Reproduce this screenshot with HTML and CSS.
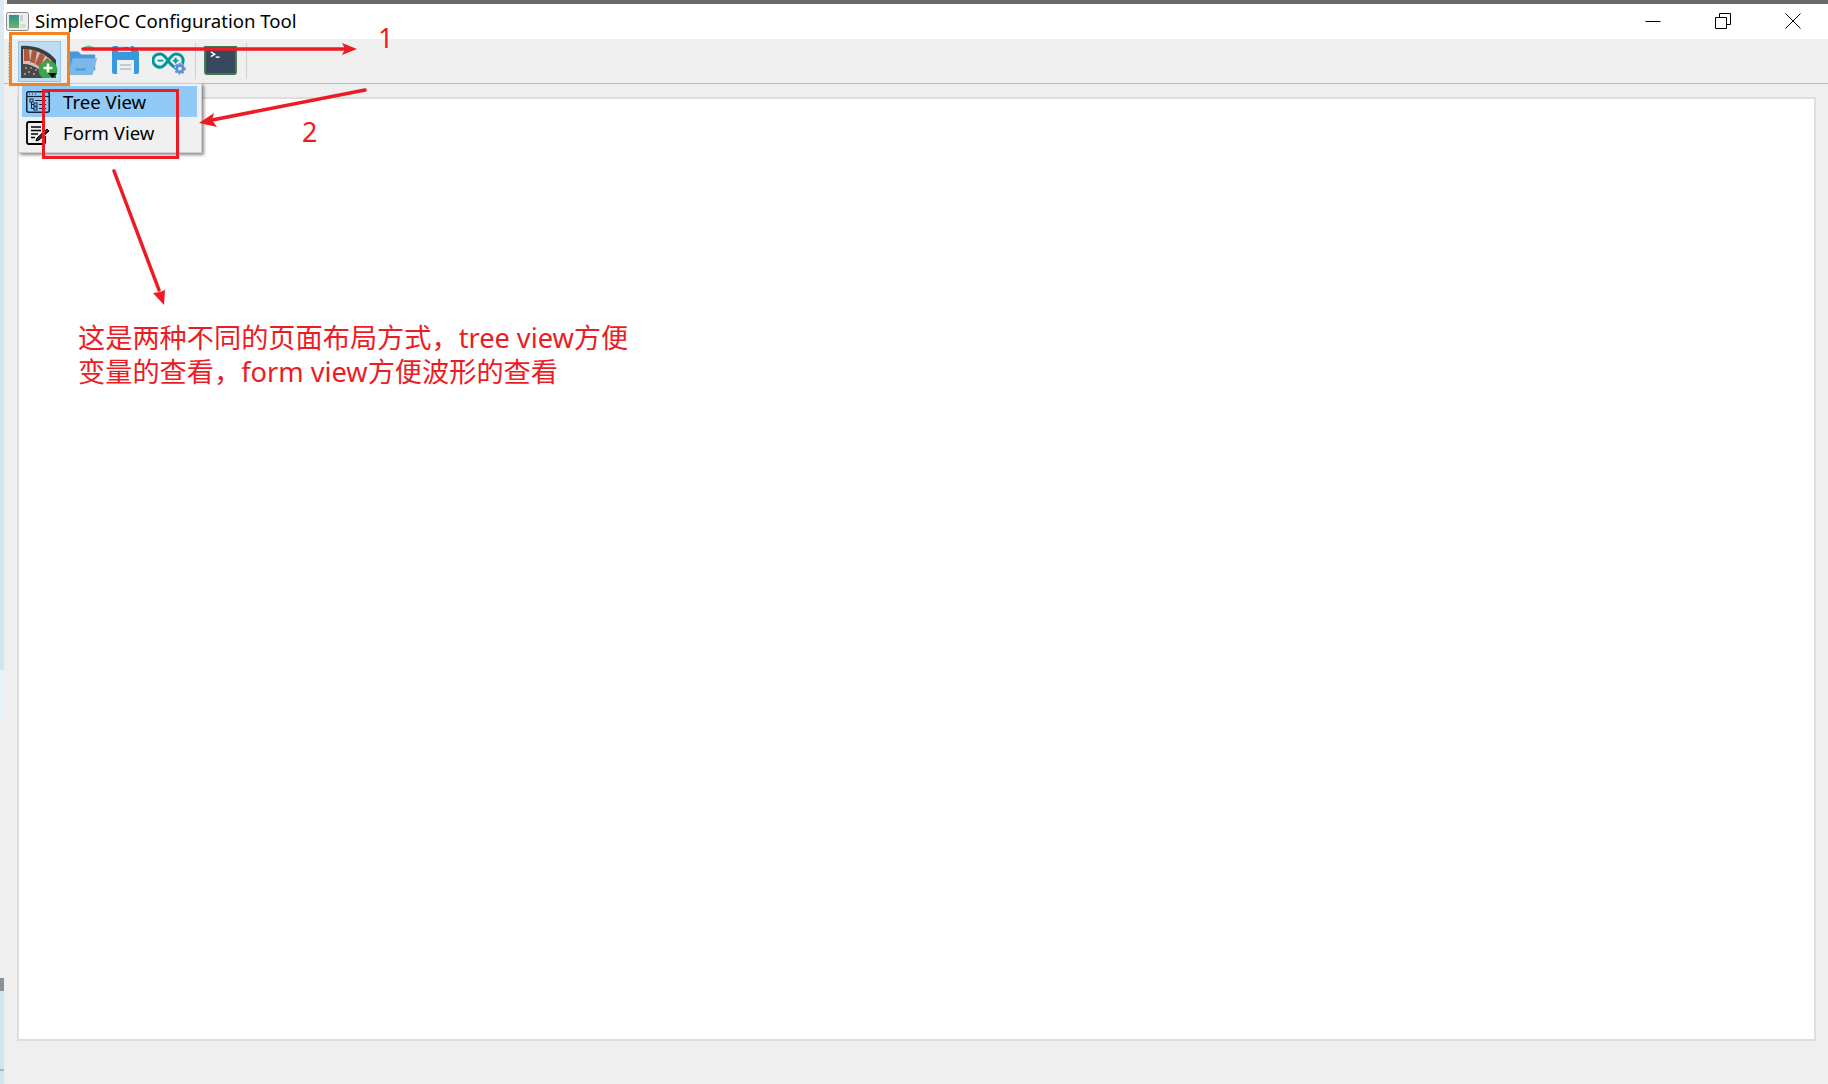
FILE: index.html
```html
<!DOCTYPE html>
<html lang="zh">
<head>
<meta charset="utf-8">
<title>SimpleFOC Configuration Tool</title>
<link rel="stylesheet" href="styles.css">
</head>
<body>
<div class="page">
  <div class="strip">
    <div class="strip-top"></div>
    <div class="strip-light"></div>
    <div class="strip-mid"></div>
    <div class="strip-mark"></div>
    <div class="strip-low"></div>
    <div class="strip-bar"></div>
    <div class="strip-end"></div>
  </div>
  <div class="window">
    <div class="topline"></div>
    <header class="titlebar">
      <svg class="app-icon" width="24" height="20" viewBox="0 0 24 20">
        <rect x="0.5" y="0.5" width="22" height="18" rx="2" fill="#eee" stroke="#8a8a8a"/>
        <defs><linearGradient id="ag" x1="0" y1="0" x2="0" y2="1"><stop offset="0" stop-color="#2f8f8a"/><stop offset="1" stop-color="#6fb56a"/></linearGradient></defs>
        <rect x="3" y="3" width="10" height="13" fill="url(#ag)"/>
        <rect x="14" y="3" width="3" height="6" fill="#c8d0d0"/>
        <rect x="14" y="12" width="6" height="4" fill="#d8dcdc"/>
      </svg>
      <span class="title">SimpleFOC Configuration Tool</span>
      <div class="controls">
        <button class="ctrl ctrl-min"><svg width="16" height="16" viewBox="0 0 16 16"><path d="M0.5 8.5H15.5" stroke="#000" fill="none"/></svg></button>
        <button class="ctrl ctrl-max"><svg width="16" height="16" viewBox="0 0 16 16"><path d="M0.5 4.5H11.5V15.5H0.5Z M4.5 4V0.5H15.5V11.5H12" stroke="#000" fill="none"/></svg></button>
        <button class="ctrl ctrl-close"><svg width="16" height="16" viewBox="0 0 16 16"><path d="M0.5 0.5L15.5 15.5M15.5 0.5L0.5 15.5" stroke="#000" fill="none"/></svg></button>
      </div>
    </header>
    <nav class="toolbar">
      <div class="grip"></div>
      <button class="tool tool-active">
        <svg width="37" height="33" viewBox="0 0 37 33">
          <path d="M0 1C14 0 27 5 35 15L35 33L0 33Z" fill="#3f3d3d"/>
          <path d="M2 4C13 4 23 8 31 16L21 27C16 22 9 19 2 19Z" fill="#c9c4c0"/>
          <g fill="#b0583c">
            <path d="M3 4l5 0 1 12-6 0z"/>
            <path d="M11 5l5 1.500-2 12-5-1.500z"/>
            <path d="M19 8l5 3-5 11-5-3z"/>
            <path d="M26 13l4 3.500-9 9-3.500-3.500z"/>
          </g>
          <path d="M0 19C8 19 15 22 20 28L20 33L0 33Z" fill="#4a4848"/>
          <circle cx="8" cy="27" r="1" fill="#aaa"/><circle cx="13" cy="29" r="1" fill="#aaa"/><circle cx="5" cy="23" r="1" fill="#aaa"/><circle cx="15" cy="25" r="1" fill="#999"/><circle cx="10" cy="23" r="1" fill="#999"/><circle cx="4" cy="29" r="1" fill="#aaa"/>
          <circle cx="27" cy="25" r="9.500" fill="#3ba54a"/>
          <path d="M22.500 23H31.500M27 18.500V27.500" stroke="#fff" stroke-width="2.500" fill="none"/>
          <path d="M27 28H36L31.500 33Z" fill="#000"/>
        </svg>
      </button>
      <button class="tool tool-folder">
        <svg width="32" height="31" viewBox="0 0 34 33">
          <path d="M18 4C21 1 26 1 28 4" stroke="#7cc48f" stroke-width="2.500" fill="none"/>
          <path d="M26 2l4 2-4 3z" fill="#7cc48f"/>
          <path d="M2 7H12L15 10H30V27H2Z" fill="#4a96d6"/>
          <path d="M6 14H32L27 32H1Z" fill="#7ab8ea"/>
          <rect x="9" y="25" width="11" height="2" fill="#4a96d6"/>
        </svg>
      </button>
      <button class="tool tool-floppy">
        <svg width="27" height="28" viewBox="0 0 27 28">
          <path d="M2 0H21L27 6V26Q27 28 25 28H2Q0 28 0 26V2Q0 0 2 0Z" fill="#3a98dc"/>
          <rect x="6" y="0" width="13" height="6" fill="#dbe6ee"/>
          <rect x="12" y="1" width="4" height="3" fill="#5b6770"/>
          <rect x="5" y="14" width="17" height="14" rx="1" fill="#eef1f3"/>
          <path d="M8 19H19M8 23H19" stroke="#b5bcc2" stroke-width="1.500"/>
        </svg>
      </button>
      <button class="tool tool-arduino">
        <svg width="34" height="23" viewBox="0 0 36 24">
          <path d="M9 2C2 2 1 7 1 9S3 16 9 16C15 16 19 2 25 2C31 2 33 6 33 9S30 16 25 16C19 16 15 2 9 2Z" stroke="#00979c" stroke-width="3.200" fill="none"/>
          <path d="M6 9H12M22 9H28M25 6V12" stroke="#00979c" stroke-width="2" fill="none"/>
          <circle cx="29.500" cy="17.500" r="6" fill="#efefef"/>
          <circle cx="29.500" cy="17.500" r="3.500" fill="none" stroke="#5a8fd8" stroke-width="3"/>
          <circle cx="29.500" cy="17.500" r="5.500" fill="none" stroke="#5a8fd8" stroke-width="1.500" stroke-dasharray="2 2"/>
        </svg>
      </button>
      <div class="sep"></div>
      <button class="tool tool-term">
        <svg width="33" height="29" viewBox="0 0 34 30">
          <path d="M1 0H33V27Q33 29 31 29H3Q1 29 1 27Z" fill="#36495e" stroke="#43784f" stroke-width="2"/>
          <path d="M7 6L11 8.500L7 11" stroke="#fff" stroke-width="1.500" fill="none"/>
          <path d="M12 11.500H16" stroke="#fff" stroke-width="1.500"/>
        </svg>
      </button>
      <div class="sep sep-last"></div>
    </nav>
    <main class="main">
      <section class="panel">
        <p class="note">这是两种不同的页面布局方式，tree view方便<br>变量的查看，form view方便波形的查看</p>
      </section>
    </main>
  </div>
</div>

<div class="menu">
  <div class="menu-item menu-item-on">
    <svg class="menu-icon" width="24" height="22" viewBox="0 0 24 22">
      <rect x="0.750" y="0.750" width="22.500" height="20.500" rx="2" fill="none" stroke="#16263a" stroke-width="1.500"/>
      <path d="M1 5.500H23" stroke="#16263a" stroke-width="1.200"/>
      <path d="M3 3H4M6 3H7M9 3H10" stroke="#16263a"/>
      <rect x="4" y="8" width="3" height="3" fill="none" stroke="#16263a"/>
      <rect x="8" y="12" width="3" height="3" fill="none" stroke="#16263a"/>
      <rect x="8" y="16" width="3" height="3" fill="none" stroke="#16263a"/>
      <path d="M5.500 11V17.500H8M5.500 13.500H8M13 13.500H20M13 17.500H20M9 9.500H20" stroke="#16263a" fill="none"/>
    </svg>
    <span>Tree View</span>
  </div>
  <div class="menu-item">
    <svg class="menu-icon" width="24" height="24" viewBox="0 0 24 24">
      <path d="M17 1H3Q1 1 1 3V21Q1 23 3 23H17Q19 23 19 21V15" fill="none" stroke="#000" stroke-width="1.800"/>
      <path d="M5 6H15M5 9.500H15M5 13H12M5 16.500H9" stroke="#000" stroke-width="1.500"/>
      <path d="M11 17L21 8L23 10L13 19L10 20Z" fill="#333" stroke="#000"/>
    </svg>
    <span>Form View</span>
  </div>
</div>

<div class="orange-box"></div>
<div class="red-box"></div>
<span class="num num-1">1</span>
<span class="num num-2">2</span>

<svg class="arrows" width="1828" height="1084" viewBox="0 0 1828 1084">
  <g stroke="#ed1c24" stroke-width="3.500" stroke-linecap="round" fill="none">
    <path d="M83 49H345"/>
    <path d="M365 90L212 120"/>
    <path d="M114 171L159 290"/>
  </g>
  <g fill="#ed1c24">
    <path d="M357 49L342 43L345 49L342 55Z"/>
    <path d="M199 123L214 113L212 120L217 127Z"/>
    <path d="M164 305L153 293L160 292L165 290Z"/>
  </g>
</svg>
</body>
</html>
```

FILE: styles.css
```css
* { box-sizing: border-box; }
html, body { margin: 0; padding: 0; height: 100%; overflow: hidden; background: #efefef; }
body { font-family: "Noto Sans", "Noto Sans CJK SC", sans-serif; color: #000; }

.page { display: flex; width: 1828px; height: 1084px; }

.strip { width: 4px; display: flex; flex-direction: column; flex: none; }
.strip-top { height: 120px; background: #dcebf3; }
.strip-light { height: 550px; background: #cfe5ef; }
.strip-mid { height: 52px; background: #e8f3f9; }
.strip-mark { height: 13px; margin-top: 256px; background: #8a9298; }
.strip-low { height: 78px; background: #cfe5ef; }
.strip-bar { height: 2px; background: #a9b4ba; }
.strip-end { flex: 1; background: #cfe5ef; }

.window { flex: 1; display: flex; flex-direction: column; min-width: 0; }
.topline { height: 4px; margin-left: 3px; background: #6b6b6b; flex: none; }

.titlebar { height: 35px; flex: none; background: #fff; display: flex; align-items: center; padding-left: 2px; }
.app-icon { flex: none; }
.title { margin: -2px 0 0 5px; font-size: 18.6px; line-height: 24px; white-space: nowrap; }
.controls { display: flex; align-items: center; margin: -2px 27px 0 auto; gap: 54px; }
.ctrl { width: 16px; height: 16px; padding: 0; border: 0; background: none; display: block; }
.ctrl svg { display: block; }

.toolbar { height: 45px; flex: none; background: #efefef; border-bottom: 1px solid #bcbcbc; display: flex; align-items: center; padding: 0 0 0 4px; }
.grip { width: 2px; height: 38px; margin-right: 8px; background-image: radial-gradient(circle, #b8b8b8 0.7px, transparent 0.9px); background-size: 2px 3px; flex: none; }
.tool { padding: 0; border: 0; background: none; display: flex; align-items: center; justify-content: center; flex: none; }
.tool svg { display: block; }
.tool-active { width: 43px; height: 41px; background: #bddcf3; border: 1px solid #8fc7f0; margin-right: 6px; }
.tool-folder { width: 32px; height: 31px; align-self: flex-start; margin: 6px 13px 0 0; }
.tool-floppy { width: 27px; height: 28px; align-self: flex-start; margin: 7px 13px 0 0; }
.tool-arduino { width: 34px; height: 23px; align-self: flex-start; margin: 13px 9px 0 0; }
.sep { width: 1px; height: 36px; background: #d0d0d0; flex: none; }
.tool-term { width: 33px; height: 29px; align-self: flex-start; margin: 7px 9px 0 8px; }

.main { flex: 1; min-height: 0; display: flex; padding: 13px 12px 43px 13px; background: #efefef; }
.panel { flex: 1; background: #fff; border: 2px solid #dedede; position: relative; }
.note { position: absolute; left: 59px; top: 222px; margin: 0; font-size: 27.2px; line-height: 34px; color: #ed1c24; white-space: nowrap; }

.menu { position: absolute; left: 18px; top: 83px; width: 184px; height: 70px; background: #f0f0f0; border: 1px solid #cfcfcf; box-shadow: 2px 2px 3px rgba(0, 0, 0, 0.45); padding: 2px 4px 0 3px; }
.menu-item { display: flex; align-items: center; height: 31px; font-size: 18.6px; position: relative; }
.menu-item span { position: absolute; left: 41px; line-height: 24px; }
.menu-item-on { background: #91c9f7; }
.menu-icon { position: absolute; left: 4px; }

.orange-box { position: absolute; left: 9px; top: 32px; width: 61px; height: 54px; border: 3px solid #f58220; }
.red-box { position: absolute; left: 42px; top: 89px; width: 137px; height: 70px; border: 3px solid #ed1c24; }
.num { position: absolute; color: #ed1c24; font-size: 27px; line-height: 32px; }
.num-1 { left: 378px; top: 22px; }
.num-2 { left: 302px; top: 116px; }
.arrows { position: absolute; left: 0; top: 0; pointer-events: none; }
```
